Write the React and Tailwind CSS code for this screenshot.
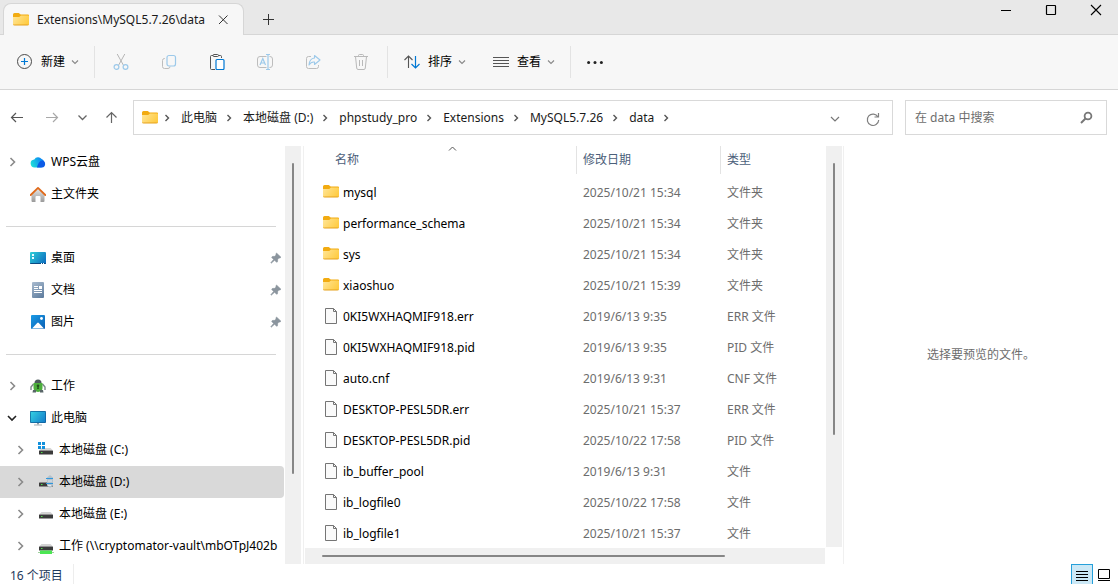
import clsx from "clsx";

const CRUMBS = ["此电脑", "本地磁盘 (D:)", "phpstudy_pro", "Extensions", "MySQL5.7.26", "data"];

const FILES = [
  { name: "mysql", date: "2025/10/21 15:34", type: "文件夹", folder: true },
  { name: "performance_schema", date: "2025/10/21 15:34", type: "文件夹", folder: true },
  { name: "sys", date: "2025/10/21 15:34", type: "文件夹", folder: true },
  { name: "xiaoshuo", date: "2025/10/21 15:39", type: "文件夹", folder: true },
  { name: "0KI5WXHAQMIF918.err", date: "2019/6/13 9:35", type: "ERR 文件" },
  { name: "0KI5WXHAQMIF918.pid", date: "2019/6/13 9:35", type: "PID 文件" },
  { name: "auto.cnf", date: "2019/6/13 9:31", type: "CNF 文件" },
  { name: "DESKTOP-PESL5DR.err", date: "2025/10/21 15:37", type: "ERR 文件" },
  { name: "DESKTOP-PESL5DR.pid", date: "2025/10/22 17:58", type: "PID 文件" },
  { name: "ib_buffer_pool", date: "2019/6/13 9:31", type: "文件" },
  { name: "ib_logfile0", date: "2025/10/22 17:58", type: "文件" },
  { name: "ib_logfile1", date: "2025/10/21 15:37", type: "文件" },
];

function Svg({ size = 16, className, children }) {
  return (
    <svg
      width={size}
      height={size}
      viewBox={`0 0 ${size} ${size}`}
      fill="none"
      className={clsx("shrink-0", className)}
      aria-hidden="true"
    >
      {children}
    </svg>
  );
}

// Small chevron used by the toolbar and breadcrumbs
function Chevron({ dir = "right", className }) {
  const paths = {
    right: "M4.5 3 7.5 6 4.5 9",
    down: "M3 4.5 6 7.5 9 4.5",
  };
  return (
    <Svg size={12} className={className}>
      <path d={paths[dir]} stroke="currentColor" strokeWidth={dir === "right" ? 1.4 : 1.1} />
    </Svg>
  );
}

// Expand / collapse arrow of the tree
function TreeArrow({ dir }) {
  return (
    <Svg size={12}>
      {dir === "down" ? (
        <path d="M2 4 6 8 10 4" stroke="#222" strokeWidth="1.6" />
      ) : (
        <path d="M4.500 2 8.500 6 4.500 10" stroke="#8a8a8a" strokeWidth="1.600" />
      )}
    </Svg>
  );
}

function FolderIcon({ className }) {
  return (
    <Svg className={className}>
      <path d="M0 2.500Q0 1 1.500 1h4.200l2 1.500H15q1 0 1 1V7H0z" fill="#f2ab11" />
      <path d="M0 5h6.200l1.800-1.500H15q1 0 1 1V12q0 1-1 1H1q-1 0-1-1z" fill="url(#folder)" />
      <path d="M.3 12.500q.3.500 1 .5h13.400q.7 0 1-.5" stroke="#e5a11c" />
      <defs>
        <linearGradient id="folder" x1="0" y1="3" x2="14" y2="13" gradientUnits="userSpaceOnUse">
          <stop stopColor="#ffe69a" />
          <stop offset="1" stopColor="#ffcb40" />
        </linearGradient>
      </defs>
    </Svg>
  );
}

function FileIcon({ className }) {
  return (
    <Svg className={className}>
      <path d="M2.500.5h8l3 3v12h-11z" fill="#fafafa" stroke="#757575" />
      <path d="M10.500.5v3h3" stroke="#757575" />
    </Svg>
  );
}

function CloudIcon() {
  return (
    <Svg>
      <path d="M5 13.500a4 4 0 0 1-.7-8A4.500 4.500 0 0 1 11.600 5 4.500 4.500 0 0 1 11 13.500z" fill="url(#cloud)" />
      <path d="M7 13.500C8 9.500 10 6.300 12.300 6.500A3.550 3.550 0 0 1 12 13.500z" fill="#0c5be6" />
      <defs>
        <linearGradient id="cloud" x1="1" y1="11" x2="12" y2="6" gradientUnits="userSpaceOnUse">
          <stop stopColor="#1fe0d8" />
          <stop offset="1" stopColor="#0a86f5" />
        </linearGradient>
      </defs>
    </Svg>
  );
}

function HomeIcon() {
  return (
    <Svg>
      <path d="M1.500 8 8 2l6.500 6v7q0 1-1 1h-3v-5q0-1-1-1h-3q-1 0-1 1v5h-3q-1 0-1-1z" fill="url(#home)" />
      <path d="M.7 9 8 1.900 15.300 9" stroke="#e06a1b" strokeWidth="1.800" strokeLinecap="round" strokeLinejoin="round" />
      <defs>
        <linearGradient id="home" x1="8" y1="3" x2="8" y2="16" gradientUnits="userSpaceOnUse">
          <stop stopColor="#e4e4e4" />
          <stop offset="1" stopColor="#9a9a9a" />
        </linearGradient>
      </defs>
    </Svg>
  );
}

function DesktopIcon() {
  return (
    <Svg>
      <rect y="2" width="16" height="12" rx="1" fill="url(#desk)" />
      <path d="M0 13h16q0 1-1 1H1q-1 0-1-1z" fill="#0b4a82" />
      <path d="M2 4h2v2H2zM2 7h2v2H2z" fill="#e8fbff" />
      <path d="M11 13h1v1h-1zM13 13h1v1h-1z" fill="#fff" />
      <defs>
        <linearGradient id="desk" x1="0" y1="2" x2="16" y2="14" gradientUnits="userSpaceOnUse">
          <stop stopColor="#2fd0d8" />
          <stop offset="1" stopColor="#0b67bd" />
        </linearGradient>
      </defs>
    </Svg>
  );
}

function DocumentIcon() {
  return (
    <Svg>
      <rect x="2" y="0" width="12" height="16" rx="1" fill="url(#doc)" />
      <path d="M4 4.500h4M4 6.500h4M4 8.500h8M4 10.500h8" stroke="#fff" />
      <path d="M9 4h3v3H9z" fill="#fff" />
      <defs>
        <linearGradient id="doc" x1="2" y1="0" x2="14" y2="16" gradientUnits="userSpaceOnUse">
          <stop stopColor="#a9bbcf" />
          <stop offset="1" stopColor="#5b7a9c" />
        </linearGradient>
      </defs>
    </Svg>
  );
}

function PictureIcon() {
  return (
    <Svg>
      <rect x="1" y="1" width="14" height="14" rx="1" fill="url(#pic)" />
      <path d="M2 14.500 7.200 9q.8-.8 1.600 0l5.200 5.500z" fill="#fff" />
      <circle cx="11.500" cy="4.500" r="1.400" fill="#fff" />
      <defs>
        <linearGradient id="pic" x1="1" y1="1" x2="15" y2="15" gradientUnits="userSpaceOnUse">
          <stop stopColor="#1a9be6" />
          <stop offset="1" stopColor="#0a5fb4" />
        </linearGradient>
      </defs>
    </Svg>
  );
}

function RobotIcon() {
  return (
    <Svg>
      <path d="M4.500 5q0-3.500 3.500-3.500T11.500 5z" fill="#4d5a5c" />
      <path d="M3.500 6 1 9v3M12.500 6 15 9v3" stroke="#7b8789" strokeWidth="1.400" />
      <path d="M3.500 5h9v5q0 3-4.500 4-4.500-1-4.500-4z" fill="#4cae3c" />
      <circle cx="8" cy="7.800" r="1.300" fill="#22521c" />
      <path d="M7.500 8h1l.4 3H7.100z" fill="#22521c" />
      <path d="M3 12h3v2.500H2.500zM10 12h3l.5 2.500H10z" fill="#596668" />
    </Svg>
  );
}

function ComputerIcon() {
  return (
    <Svg>
      <rect y="1" width="16" height="12" rx="1" fill="#0e5d96" />
      <rect x=".7" y="1.700" width="14.600" height="10.600" rx=".5" fill="url(#pc)" />
      <path d="M7 13h2v1.500H7z" fill="#8b98a1" />
      <path d="M4 15h8" stroke="#a3adb3" strokeWidth="1.200" />
      <defs>
        <linearGradient id="pc" x1="0" y1="1" x2="16" y2="13" gradientUnits="userSpaceOnUse">
          <stop stopColor="#36d5e4" />
          <stop offset="1" stopColor="#1278c8" />
        </linearGradient>
      </defs>
    </Svg>
  );
}

function DriveIcon({ kind }) {
  return (
    <Svg>
      <path d="M3.500 6h9L15 8.500H1z" fill="#d4d4d4" />
      <rect x="1" y="8.500" width="14" height="4" rx=".5" fill="#3b3b3b" />
      <path d="M3 10h1.500v1H3z" fill="#4fe04a" />
      {kind === "windows" && <path d="M0 0h3v3H0zM4 0h3v3H4zM0 4h3v3H0zM4 4h3v3H4z" fill="#1190dc" />}
      {kind === "synced" && (
        <>
          <path d="M9 3.500 12 1l3 2.500v8L12 14l-3-2.500z" fill="#b5c2cc" />
          <path d="M8 4.500h7M8 9.500h7" stroke="#2f97dd" />
          <path d="M10 7h4M10 11.500h3" stroke="#dfe8ee" />
        </>
      )}
      {kind === "network" && (
        <>
          <path d="M0 14.500h16" stroke="#9ed29e" />
          <rect x="2" y="12.500" width="12" height="3.500" rx=".5" fill="#4be653" />
        </>
      )}
    </Svg>
  );
}

function PinIcon() {
  return (
    <Svg size={12} className="text-[#8b959e]">
      <path
        d="M6.500 1 11 5.300 9.800 6 8.600 6.200 7.700 7.500 7.500 9.800 6.600 10.300 4.600 8.300 1.200 11.200.8 10.800 3.600 7.400 1.700 5.400 2.300 4.500 4.700 4.300 5.900 3.300 6 2z"
        fill="currentColor"
        stroke="currentColor"
        strokeWidth=".6"
      />
    </Svg>
  );
}

const NAV_GROUPS = [
  [
    { label: "WPS云盘", icon: <CloudIcon />, arrow: "right" },
    { label: "主文件夹", icon: <HomeIcon /> },
  ],
  [
    { label: "桌面", icon: <DesktopIcon />, pinned: true },
    { label: "文档", icon: <DocumentIcon />, pinned: true },
    { label: "图片", icon: <PictureIcon />, pinned: true },
  ],
  [
    { label: "工作", icon: <RobotIcon />, arrow: "right" },
    { label: "此电脑", icon: <ComputerIcon />, arrow: "down" },
    { label: "本地磁盘 (C:)", icon: <DriveIcon kind="windows" />, arrow: "right", nested: true },
    { label: "本地磁盘 (D:)", icon: <DriveIcon kind="synced" />, arrow: "right", nested: true, selected: true },
    { label: "本地磁盘 (E:)", icon: <DriveIcon />, arrow: "right", nested: true },
    {
      label: "工作 (\\\\cryptomator-vault\\mbOTpJ402b",
      icon: <DriveIcon kind="network" />,
      arrow: "right",
      nested: true,
    },
  ],
];

function TitleBar() {
  const windowButton = "flex w-[45px] items-center justify-center";
  return (
    <header className="flex h-[35px] shrink-0 border-b border-[#d6d6d6] bg-[#e8e8e8]">
      <div className="-mb-px ml-[3px] mt-[3px] flex w-[241px] items-center rounded-t-lg border border-b-0 border-[#d6d6d6] bg-[#f7f7f7] pl-[9px]">
        <FolderIcon />
        <span className="ml-2 flex-1 whitespace-nowrap text-[#1a1a1a]">Extensions\MySQL5.7.26\data</span>
        <button className="mr-3 p-0.5" aria-label="关闭标签页">
          <Svg size={12}>
            <path d="m2 1.500 8.500 8.500M10.500 1.500 2 10" stroke="#333" />
          </Svg>
        </button>
      </div>
      <button className="ml-4 mt-1 px-0.5" aria-label="新建标签页">
        <Svg size={12}>
          <path d="M6.500 1v11M1 6.500h11" stroke="#333" />
        </Svg>
      </button>
      <div className="ml-auto flex h-5 text-black">
        <button className={windowButton} aria-label="最小化">
          <Svg size={12}>
            <path d="M1 6.500h10" stroke="currentColor" />
          </Svg>
        </button>
        <button className={windowButton} aria-label="最大化">
          <Svg size={12}>
            <rect x="1.500" y="1.500" width="9" height="9" rx=".5" stroke="currentColor" strokeWidth="1.200" />
          </Svg>
        </button>
        <button className={windowButton} aria-label="关闭">
          <Svg size={12}>
            <path d="m1 1 10 10M11 1 1 11" stroke="currentColor" strokeWidth="1.100" />
          </Svg>
        </button>
      </div>
    </header>
  );
}

function ToolButton({ label, children }) {
  return (
    <button className="flex h-8 w-12 items-center justify-center" aria-label={label}>
      {children}
    </button>
  );
}

function ToolBar() {
  const divider = "h-8 w-px bg-[#e3e3e3]";
  return (
    <div className="flex h-[55px] shrink-0 items-center border-b border-[#d6d6d6] bg-[#f7f7f7] pl-[17px] text-black">
      <button className="flex items-center gap-2">
        <Svg>
          <circle cx="7.500" cy="7.500" r="7" stroke="#4a4a4a" />
          <path d="M7.500 4v7M4 7.500h7" stroke="#0078d4" strokeWidth="1.200" />
        </Svg>
        新建
        <Chevron dir="down" className="-ml-1 text-[#888]" />
      </button>
      <div className={clsx(divider, "ml-[13px] mr-0.5")} />
      <ToolButton label="剪切">
        <Svg>
          <path d="M4.200 0 10.300 11M11.800 0 5.700 11" stroke="#b5b5b5" />
          <circle cx="3.500" cy="13" r="2.400" stroke="#9cc9ea" strokeWidth="1.200" />
          <circle cx="12.500" cy="13" r="2.400" stroke="#9cc9ea" strokeWidth="1.200" />
        </Svg>
      </ToolButton>
      <ToolButton label="复制">
        <Svg>
          <path d="M4 4.500h-.5q-2 0-2 2v6q0 2 2 2H7q2 0 2-2" stroke="#bdbdbd" />
          <rect x="6" y="1.500" width="8.500" height="10.500" rx="2" stroke="#9cc9ea" strokeWidth="1.200" />
        </Svg>
      </ToolButton>
      <ToolButton label="粘贴">
        <Svg>
          <path d="M4 1.500H2.500q-1 0-1 1v12q0 1 1 1h3.500M9.500 1.500h2q1 0 1 1V4" stroke="#555" />
          <path d="M4 1.500q0-1 1-1h3.500q1 0 1 1t-1 1H5q-1 0-1-1z" stroke="#555" />
          <rect x="7" y="5.500" width="8" height="10" rx="1" fill="#fff" stroke="#0078d4" strokeWidth="1.200" />
        </Svg>
      </ToolButton>
      <ToolButton label="重命名">
        <Svg>
          <path
            d="M9.500 2.500H3q-2.500 0-2.500 2.500v6q0 2.500 2.500 2.500h6.500M12.500 2.500h.5q2.500 0 2.500 2.500v6q0 2.500-2.500 2.500h-.5"
            stroke="#bdbdbd"
          />
          <path d="M9 .5h4M9 15.500h4M11 .5v15M3 11l2.800-6.500L8.500 11M4 9h3.500" stroke="#9cc9ea" strokeWidth="1.200" />
        </Svg>
      </ToolButton>
      <ToolButton label="共享">
        <Svg>
          <path d="M6 2.500H3.500q-2 0-2 2v8q0 2 2 2h8q2 0 2-2V11" stroke="#bdbdbd" />
          <path
            d="M9.500 1.500 15 6l-5.500 4.500V8Q6 7.500 4 11q.5-6.500 5.500-7z"
            stroke="#9cc9ea"
            strokeWidth="1.100"
            strokeLinejoin="round"
          />
        </Svg>
      </ToolButton>
      <ToolButton label="删除">
        <Svg>
          <path
            d="M1 2.500h14M5.500 2.500V1.500q0-1 1-1h3q1 0 1 1v1M2.500 2.500l1.200 11.500q.2 1.500 1.300 1.500h6q1.100 0 1.300-1.500l1.200-11.500M6.500 6v6M9.500 6v6"
            stroke="#b9b9b9"
          />
        </Svg>
      </ToolButton>
      <div className={clsx(divider, "ml-0.5 mr-4")} />
      <button className="flex items-center gap-2">
        <Svg>
          <path d="M4.500 14V2M.5 6l4-4 4 4" stroke="#555" strokeWidth="1.100" />
          <path d="M11.500 2v12M7.500 10l4 4 4-4" stroke="#0078d4" strokeWidth="1.200" />
        </Svg>
        排序
        <Chevron dir="down" className="-ml-1 text-[#888]" />
      </button>
      <button className="ml-[25px] flex items-center gap-2">
        <Svg>
          <path d="M0 3.500h16M0 6.500h16M0 9.500h16M0 12.500h16" stroke="#555" />
        </Svg>
        查看
        <Chevron dir="down" className="-ml-1 text-[#888]" />
      </button>
      <div className={clsx(divider, "ml-[13px] mr-4")} />
      <button aria-label="查看更多">
        <Svg>
          <circle cx="1.600" cy="8.500" r="1.500" fill="#222" />
          <circle cx="8" cy="8.500" r="1.500" fill="#222" />
          <circle cx="14.400" cy="8.500" r="1.500" fill="#222" />
        </Svg>
      </button>
    </div>
  );
}

function AddressRow() {
  const navButton = "flex w-[30px] items-center justify-center";
  return (
    <div className="flex shrink-0 pb-[11px] pl-0.5 pr-[11px] pt-2.5">
      <button className={navButton} aria-label="后退">
        <Svg>
          <path d="M14 7.500H2.500M7 3 2.500 7.500 7 12" stroke="#555" strokeWidth="1.200" />
        </Svg>
      </button>
      <button className={clsx(navButton, "ml-[5px]")} aria-label="前进">
        <Svg>
          <path d="M2 7.500h11.500M9 3l4.500 4.500L9 12" stroke="#a8a8a8" strokeWidth="1.200" />
        </Svg>
      </button>
      <button className={navButton} aria-label="最近浏览的位置">
        <Svg>
          <path d="m4.500 5.500 4 4 4-4" stroke="#666" strokeWidth="1.300" />
        </Svg>
      </button>
      <button className={navButton} aria-label="向上">
        <Svg>
          <path d="M7.500 13V2.500M2.500 7.500l5-5 5 5" stroke="#666" strokeWidth="1.200" />
        </Svg>
      </button>

      <div className="ml-1.5 flex h-[35px] flex-1 items-center border border-[#d9d9d9] pl-2">
        <FolderIcon />
        <nav className="ml-[3px] flex items-center" aria-label="路径">
          <Chevron className="text-[#555]" />
          {CRUMBS.map((crumb) => (
            <span key={crumb} className="flex items-center">
              <button className="ml-2 mr-1.5 whitespace-nowrap text-[#1a1a1a]">{crumb}</button>
              <Chevron className="text-[#555]" />
            </span>
          ))}
        </nav>
        <button className="ml-auto px-2" aria-label="历史记录">
          <Svg className="mt-1">
            <path d="m4 5 4 4 4-4" stroke="#777" strokeWidth="1.200" />
          </Svg>
        </button>
        <button className="mr-[11px] pl-3.5" aria-label="刷新">
          <Svg className="mt-1">
            <path d="M13 5A5.700 5.700 0 1 0 13.700 8M13.500 1v4H9.500" stroke="#808080" strokeWidth="1.200" />
          </Svg>
        </button>
      </div>

      <label className="ml-3 flex h-[35px] w-[202px] items-center border border-[#d9d9d9] pl-[9px] pr-3">
        <input
          type="search"
          aria-label="搜索"
          placeholder="在 data 中搜索"
          className="min-w-0 flex-1 outline-none placeholder:text-[#6d6d6d]"
        />
        <Svg>
          <circle cx="10" cy="6" r="3.400" stroke="#777" strokeWidth="1.800" />
          <path d="M7.500 8.500 3 13" stroke="#777" strokeWidth="2" />
        </Svg>
      </label>
    </div>
  );
}

function NavItem({ item }) {
  return (
    <li>
      <button
        className={clsx(
          "flex h-8 w-full items-center overflow-hidden rounded-r-sm pr-0.5 text-left text-black",
          item.nested ? "pl-3" : "pl-1",
          item.selected && "bg-[#d9d9d9]"
        )}
      >
        <span className="flex w-4 shrink-0 justify-center">{item.arrow && <TreeArrow dir={item.arrow} />}</span>
        <span className="ml-2.5 shrink-0">{item.icon}</span>
        <span className="ml-[5px] flex-1 whitespace-nowrap">{item.label}</span>
        {item.pinned && <PinIcon />}
      </button>
    </li>
  );
}

function SideBar() {
  return (
    <aside className="flex w-[304px] shrink-0 border-r border-[#f0f0f0]">
      <div className="mr-px min-w-0 flex-1 overflow-hidden">
        {NAV_GROUPS.map((group, i) => (
          <div key={i}>
            {i > 0 && <hr className="mb-[15px] ml-1.5 mr-2 mt-4 border-[#d6d6d6]" />}
            <ul>
              {group.map((item) => (
                <NavItem key={item.label} item={item} />
              ))}
            </ul>
          </div>
        ))}
      </div>
      <div className="mr-0.5 flex w-4 justify-center bg-[#f0f0f0] py-[17px]">
        <div className="h-[81%] w-0.5 rounded bg-[#868686]" />
      </div>
    </aside>
  );
}

function FileTable() {
  return (
    <table className="w-full table-fixed border-collapse text-left">
      <colgroup>
        <col className="w-[271px]" />
        <col className="w-36" />
        <col />
      </colgroup>
      <thead>
        <tr className="h-[31px] align-top text-[#4c607a]">
          <th className="relative p-0 font-normal">
            <div className="h-7 pl-[30px] leading-7">名称</div>
            <Svg size={12} className="absolute left-[142px] top-[-3px]">
              <path d="M2 7.500 5.500 4 9 7.500" stroke="#555" />
            </Svg>
          </th>
          <th className="p-0 font-normal">
            <div className="h-7 border-l border-[#e3e3e3] pl-1.5 leading-7">修改日期</div>
          </th>
          <th className="p-0 font-normal">
            <div className="h-7 border-l border-[#e3e3e3] pl-1.5 leading-7">类型</div>
          </th>
        </tr>
      </thead>
      <tbody>
        {FILES.map((file) => (
          <tr key={file.name} className="h-[31px] text-[#6d6d6d]">
            <td className="p-0 pl-[18px]">
              <div className="flex items-center gap-1 text-black">
                {file.folder ? <FolderIcon className="mb-0.5" /> : <FileIcon className="mb-0.5" />}
                {file.name}
              </div>
            </td>
            <td className="p-0 pl-[7px]">{file.date}</td>
            <td className="p-0 pl-[7px]">{file.type}</td>
          </tr>
        ))}
      </tbody>
    </table>
  );
}

function StatusBar() {
  return (
    <footer className="flex h-5 shrink-0 items-stretch overflow-hidden pl-2.5 pr-1.5">
      <span className="border-r border-[#ededed] pr-2.5 leading-6 text-[#1e395b]">16 个项目</span>
      <button
        className="ml-auto flex w-[22px] justify-center border border-b-0 border-[#26a0da] bg-[#cbe8f6] pt-1"
        aria-label="详细信息"
      >
        <Svg>
          <path d="M2 2.500h12M2 5.500h12M2 8.500h12M2 11.500h12" stroke="#000" />
        </Svg>
      </button>
      <button className="ml-[3px] pt-1" aria-label="大缩略图">
        <Svg>
          <path d="M2.500 1.500h11v9h-11zM2 12.500h12" stroke="#000" />
        </Svg>
      </button>
    </footer>
  );
}

function App() {
  return (
    <div className="flex h-screen flex-col overflow-hidden bg-white font-['Noto_Sans','Noto_Sans_CJK_SC',sans-serif] text-xs">
      <TitleBar />
      <ToolBar />
      <AddressRow />
      <div className="flex min-h-0 flex-1">
        <SideBar />
        <main className="ml-px flex w-[539px] shrink-0 flex-col border-r border-[#f0f0f0]">
          <div className="mb-px flex min-h-0 flex-1">
            <div className="min-w-0 flex-1 overflow-hidden">
              <FileTable />
            </div>
            <div className="mr-px flex w-4 justify-center bg-[#f0f0f0] py-[17px]">
              <div className="h-[74%] w-0.5 rounded bg-[#868686]" />
            </div>
          </div>
          <div className="mr-[18px] flex h-4 items-center bg-[#f0f0f0] px-[17px]">
            <div className="h-0.5 w-[83%] rounded bg-[#868686]" />
          </div>
        </main>
        <section className="flex flex-1 items-center justify-center text-[#6d6d6d]">
          选择要预览的文件。
        </section>
      </div>
      <StatusBar />
    </div>
  );
}

export default App;
